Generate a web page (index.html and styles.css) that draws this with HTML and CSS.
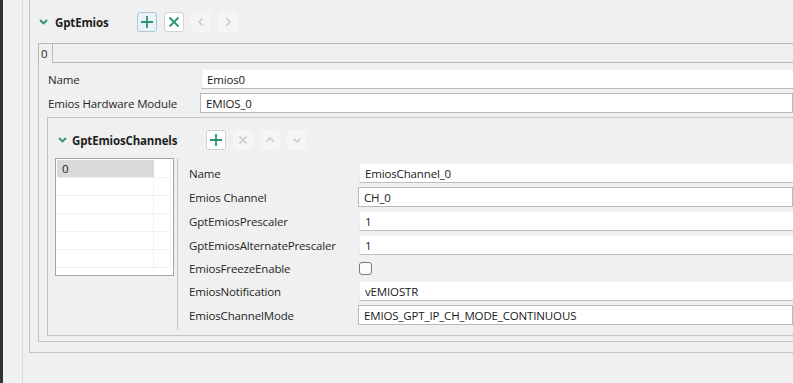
FILE: index.html
```html
<!DOCTYPE html>
<html lang="en">
<head>
  <meta charset="UTF-8" />
  <title>GptEmios</title>
  <link rel="stylesheet" href="styles.css">
</head>
<body>
  <div class="window">
    <div class="edge"></div>
    <div class="rail"></div>
    <div class="main">
      <section class="group outer">
        <header class="group-head">
          <svg class="chevron" width="9" height="6" viewBox="0 0 9 6"><path d="M1 1l3.5 3.5L8 1" /></svg>
          <h2>GptEmios</h2>
          <div class="tools">
            <button class="tool focus"><svg viewBox="0 0 12 12"><path d="M6 0v12M0 6h12" /></svg></button>
            <button class="tool"><svg viewBox="0 0 12 12"><path d="M1.5 1.5l9 9M10.5 1.5l-9 9" /></svg></button>
            <button class="tool off"><svg viewBox="0 0 12 12"><path d="M7.5 2.5L4 6l3.5 3.5" /></svg></button>
            <button class="tool off"><svg viewBox="0 0 12 12"><path d="M4.5 2.5L8 6 4.5 9.5" /></svg></button>
          </div>
        </header>

        <div class="tabs">
          <div class="tab-strip">
            <span class="tab active">0</span>
            <span class="tab-rest"></span>
          </div>
          <div class="tab-body">
            <div class="form top-form">
              <label>Name</label>
              <div class="field text">Emios0</div>
              <label>Emios Hardware Module</label>
              <div class="field combo">EMIOS_0</div>
            </div>

            <section class="group inner">
              <header class="group-head">
                <svg class="chevron" width="9" height="6" viewBox="0 0 9 6"><path d="M1 1l3.5 3.5L8 1" /></svg>
                <h2>GptEmiosChannels</h2>
                <div class="tools">
                  <button class="tool"><svg viewBox="0 0 12 12"><path d="M6 0v12M0 6h12" /></svg></button>
                  <button class="tool off"><svg viewBox="0 0 12 12"><path d="M2.5 2.5l7 7M9.5 2.5l-7 7" /></svg></button>
                  <button class="tool off"><svg viewBox="0 0 12 12"><path d="M2.5 7.5L6 4l3.5 3.5" /></svg></button>
                  <button class="tool off"><svg viewBox="0 0 12 12"><path d="M2.5 4.5L6 8l3.5-3.5" /></svg></button>
                </div>
              </header>

              <div class="channels">
                <div class="list">
                  <div class="cell selected">0</div><div class="cell"></div>
                  <div class="cell"></div><div class="cell"></div>
                  <div class="cell"></div><div class="cell"></div>
                  <div class="cell"></div><div class="cell"></div>
                  <div class="cell"></div><div class="cell"></div>
                  <div class="cell"></div><div class="cell"></div>
                </div>
                <div class="divider"></div>
                <div class="form channel-form">
                  <label>Name</label>
                  <div class="field text">EmiosChannel_0</div>
                  <label>Emios Channel</label>
                  <div class="field combo">CH_0</div>
                  <label>GptEmiosPrescaler</label>
                  <div class="field text">1</div>
                  <label>GptEmiosAlternatePrescaler</label>
                  <div class="field text">1</div>
                  <label>EmiosFreezeEnable</label>
                  <div class="check-cell"><span class="check"></span></div>
                  <label>EmiosNotification</label>
                  <div class="field text">vEMIOSTR</div>
                  <label>EmiosChannelMode</label>
                  <div class="field combo">EMIOS_GPT_IP_CH_MODE_CONTINUOUS</div>
                </div>
              </div>
            </section>
          </div>
        </div>
      </section>
    </div>
  </div>
</body>
</html>
```

FILE: styles.css
```css
:root {
  --bg: #f0f0f0;
  --line: #c4c4c4;
  --teal: #2b9474;
  --muted: #c9c9c9;
}

body {
  margin: 0;
  background: var(--bg);
  font-family: 'Open Sans', 'Noto Sans', sans-serif;
  font-size: 11.5px;
  letter-spacing: -0.15px;
  color: #262626;
}

.window {
  display: flex;
  height: 100vh;
  overflow: hidden;
}

.edge {
  width: 3px;
  background: #333;
}

.rail {
  width: 19px;
  border-right: 1px solid #dcdcdc;
}

.main {
  flex: 1;
  padding-left: 6px;
}

.group {
  border-left: 1px solid var(--line);
  border-bottom: 1px solid var(--line);
}

.outer {
  padding-bottom: 10px;
}

.group-head {
  display: flex;
  align-items: center;
  height: 20px;
  padding: 12px 0 0 9px;
  margin-bottom: 11px;
}

.group-head h2 {
  margin: 0 0 0 7px;
  font-size: 11.5px;
  font-weight: bold;
  color: #1e1e1e;
}

.chevron {
  fill: none;
  stroke: var(--teal);
  stroke-width: 1.8;
}

.tools {
  display: flex;
  gap: 7px;
  margin-left: 29px;
}

.tool {
  width: 20px;
  height: 20px;
  padding: 0;
  display: flex;
  align-items: center;
  justify-content: center;
  background: #fff;
  border: 1px solid #d2d2d2;
  border-radius: 3px;
}

.tool svg {
  width: 12px;
  height: 12px;
  fill: none;
  stroke: var(--teal);
  stroke-width: 1.8;
}

.tool.focus {
  background: #eaf2f8;
  border-color: #a8c6dc;
}

.tool.off {
  background: #f5f5f5;
  border-color: #f5f5f5;
}

.tool.off svg {
  stroke: var(--muted);
  stroke-width: 1.5;
}

/* tab folder */

.tabs {
  margin: 0 0 0 8px;
}

.tab-strip {
  display: flex;
  height: 20px;
}

.tab {
  width: 11px;
  padding-left: 2px;
  border: 1px solid #b9b9b9;
  border-bottom: none;
  line-height: 19px;
}

.tab-rest {
  flex: 1;
  border-top: 1px solid #b9b9b9;
  border-bottom: 1px solid #b9b9b9;
}

.tab-body {
  border-left: 1px solid var(--line);
  border-bottom: 1px solid var(--line);
  padding: 6px 0 5px 8px;
}

/* property forms */

.form {
  display: grid;
  row-gap: 4px;
  align-items: center;
}

.top-form {
  grid-template-columns: 153px 1fr;
  grid-auto-rows: 20px;
  padding-left: 1px;
  margin-bottom: 4px;
}

.field {
  height: 20px;
  box-sizing: border-box;
  padding: 0 5px;
  line-height: 19px;
  background: #fff;
  color: #1a1a1a;
  white-space: nowrap;
}

.field.text {
  border-top: 1px solid #f2f2f2;
  border-left: 1px solid #ececec;
  border-bottom: 1px solid #bdbdbd;
}

.field.combo {
  border: 1px solid #b9b9b9;
  margin-left: -1px;
}

/* channels */

.inner {
  border-top: 1px solid var(--line);
  padding-bottom: 5px;
}

.inner .group-head {
  padding-left: 10px;
  margin-bottom: 8px;
}

.inner .group-head h2 {
  margin-left: 5px;
}

.channels {
  display: flex;
  align-items: stretch;
  padding-left: 7px;
}

.list {
  align-self: flex-start;
  display: grid;
  grid-template-columns: 97px 17px;
  grid-auto-rows: 18px;
  width: 116px;
  height: 115px;
  padding: 1px 0 0 1px;
  overflow: hidden;
  background: #fff;
  border: 1px solid #a4a4a4;
}

.cell {
  border-bottom: 1px solid #eef0f2;
  border-right: 1px solid #eef0f2;
  padding-left: 5px;
  line-height: 18px;
}

.cell.selected {
  background: #d9d9d9;
  border-right-color: #d9d9d9;
}

.divider {
  width: 1px;
  margin: 0 11px 0 3px;
  background: var(--line);
}

.channel-form {
  flex: 1;
  grid-template-columns: 170px 1fr;
  grid-template-rows: repeat(4, 20px) 18px 20px 20px;
  padding: 5px 0 5px;
}

.check-cell {
  display: flex;
  align-items: center;
}

.check {
  width: 11px;
  height: 11px;
  border: 1px solid #7a7a7a;
  border-radius: 3px;
  background: #fbfbfb;
}
```
